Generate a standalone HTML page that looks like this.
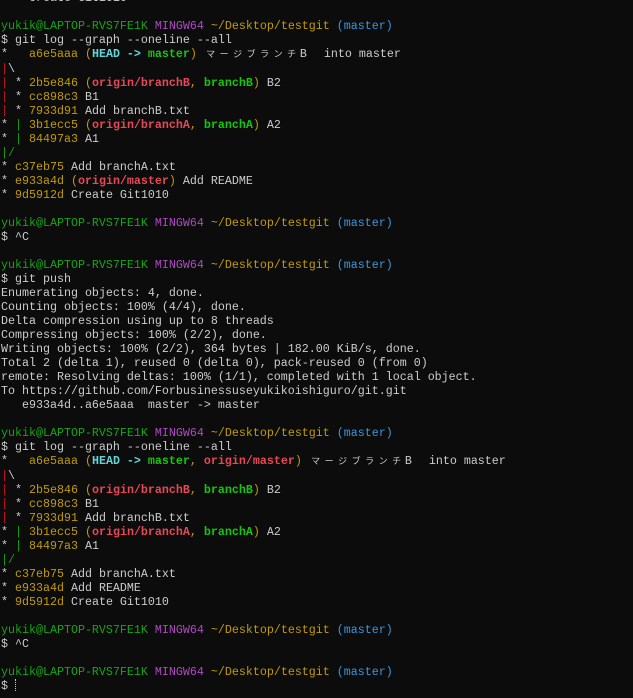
<!DOCTYPE html><html><head><meta charset="utf-8"><style>
html,body{margin:0;padding:0;background:#0c0c0c;width:633px;height:698px;overflow:hidden}
pre{margin:0;position:absolute;left:1px;top:-9px;font-family:"Liberation Mono","Noto Sans CJK JP",monospace;font-size:11.67px;line-height:14px;color:#cccccc}
.g{color:#16a516}.m{color:#b148c6}.y{color:#c19c00}.c{color:#3a96dd}
.r{color:#c50f1f}.gb{color:#13a10e}
.o{color:#e74856;font-weight:bold}.b{color:#16c60c;font-weight:bold}.h{color:#61d6d6;font-weight:bold}
.kg{display:inline-block;width:96px;white-space:nowrap}
.k{display:inline-block;width:13.5px;font-size:9px;text-align:center}
.bb{display:inline-block;width:24px}
.cur{display:inline-block;width:1px;height:12px;border-left:1px dotted #ccc;vertical-align:-2px;margin-left:7px}
</style></head><body><pre>    Create Git1010

<span class="g">yukik@LAPTOP-RVS7FE1K</span> <span class="m">MINGW64</span> <span class="y">~/Desktop/testgit</span> <span class="c">(master)</span>
$ git log --graph --oneline --all
*   <span class="y">a6e5aaa (<span class="h">HEAD -&gt; </span><span class="b">master</span>)</span> <span class="kg"><span class="k">マ</span><span class="k">ー</span><span class="k">ジ</span><span class="k">ブ</span><span class="k">ラ</span><span class="k">ン</span><span class="k">チ</span></span><span class="bb">B</span>into master
<span class="r">|</span>\
<span class="r">|</span> * <span class="y">2b5e846 (<span class="o">origin/branchB</span>, <span class="b">branchB</span>)</span> B2
<span class="r">|</span> * <span class="y">cc898c3</span> B1
<span class="r">|</span> * <span class="y">7933d91</span> Add branchB.txt
* <span class="gb">|</span> <span class="y">3b1ecc5 (<span class="o">origin/branchA</span>, <span class="b">branchA</span>)</span> A2
* <span class="gb">|</span> <span class="y">84497a3</span> A1
<span class="gb">|/</span>
* <span class="y">c37eb75</span> Add branchA.txt
* <span class="y">e933a4d (<span class="o">origin/master</span>)</span> Add README
* <span class="y">9d5912d</span> Create Git1010

<span class="g">yukik@LAPTOP-RVS7FE1K</span> <span class="m">MINGW64</span> <span class="y">~/Desktop/testgit</span> <span class="c">(master)</span>
$ ^C

<span class="g">yukik@LAPTOP-RVS7FE1K</span> <span class="m">MINGW64</span> <span class="y">~/Desktop/testgit</span> <span class="c">(master)</span>
$ git push
Enumerating objects: 4, done.
Counting objects: 100% (4/4), done.
Delta compression using up to 8 threads
Compressing objects: 100% (2/2), done.
Writing objects: 100% (2/2), 364 bytes | 182.00 KiB/s, done.
Total 2 (delta 1), reused 0 (delta 0), pack-reused 0 (from 0)
remote: Resolving deltas: 100% (1/1), completed with 1 local object.
To https://github.com/Forbusinessuseyukikoishiguro/git.git
   e933a4d..a6e5aaa  master -&gt; master

<span class="g">yukik@LAPTOP-RVS7FE1K</span> <span class="m">MINGW64</span> <span class="y">~/Desktop/testgit</span> <span class="c">(master)</span>
$ git log --graph --oneline --all
*   <span class="y">a6e5aaa (<span class="h">HEAD -&gt; </span><span class="b">master</span>, <span class="o">origin/master</span>)</span> <span class="kg"><span class="k">マ</span><span class="k">ー</span><span class="k">ジ</span><span class="k">ブ</span><span class="k">ラ</span><span class="k">ン</span><span class="k">チ</span></span><span class="bb">B</span>into master
<span class="r">|</span>\
<span class="r">|</span> * <span class="y">2b5e846 (<span class="o">origin/branchB</span>, <span class="b">branchB</span>)</span> B2
<span class="r">|</span> * <span class="y">cc898c3</span> B1
<span class="r">|</span> * <span class="y">7933d91</span> Add branchB.txt
* <span class="gb">|</span> <span class="y">3b1ecc5 (<span class="o">origin/branchA</span>, <span class="b">branchA</span>)</span> A2
* <span class="gb">|</span> <span class="y">84497a3</span> A1
<span class="gb">|/</span>
* <span class="y">c37eb75</span> Add branchA.txt
* <span class="y">e933a4d</span> Add README
* <span class="y">9d5912d</span> Create Git1010

<span class="g">yukik@LAPTOP-RVS7FE1K</span> <span class="m">MINGW64</span> <span class="y">~/Desktop/testgit</span> <span class="c">(master)</span>
$ ^C

<span class="g">yukik@LAPTOP-RVS7FE1K</span> <span class="m">MINGW64</span> <span class="y">~/Desktop/testgit</span> <span class="c">(master)</span>
$<span class="cur"></span></pre></body></html>
